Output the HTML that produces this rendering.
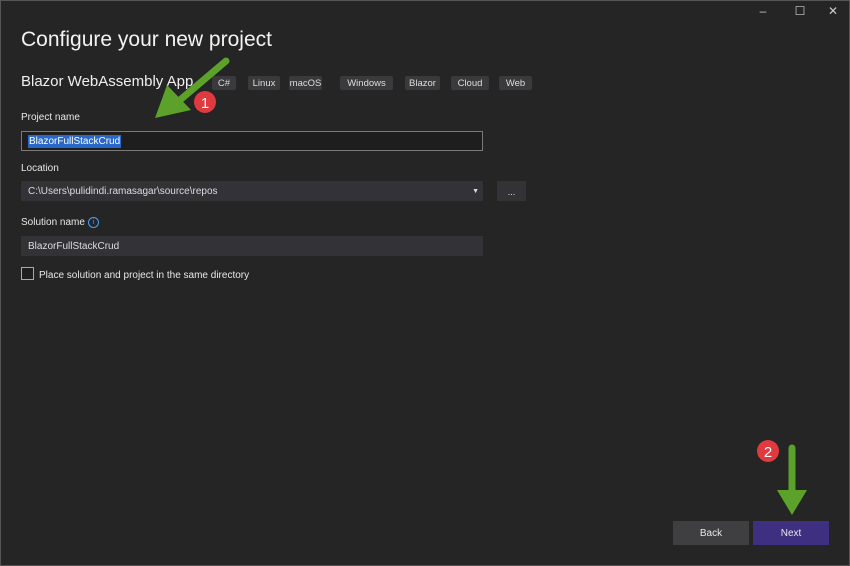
<!DOCTYPE html>
<html><head><style>
body{margin:0;width:850px;height:566px;background:#252526;font-family:"Liberation Sans",sans-serif;color:#e8e8e8;position:relative;overflow:hidden}
.frame{position:absolute;left:0;top:0;width:848px;height:564px;border:1px solid #555}
.a{position:absolute}
.tag{position:absolute;top:76px;height:14px;background:#3a3a3c;border-radius:2px;font-size:9.5px;line-height:15px;text-align:center;color:#ddd}
.lbl{position:absolute;left:21px;font-size:10px;color:#e8e8e8}
.inp{position:absolute;left:21px;width:462px;height:20px;background:#333337;font-size:10px;line-height:22px;box-sizing:border-box;padding-left:7px;color:#ddd}
.wb{position:absolute;top:4px;font-size:12px;color:#ccc;width:14px;text-align:center;margin-left:-7px}
</style></head><body>
<div class="frame"></div>
<div class="wb" style="left:763px">–</div>
<div class="wb" style="left:800px">☐</div>
<div class="wb" style="left:833px">✕</div>
<div class="a" style="left:21px;top:28px;font-size:21px;color:#f2f2f2">Configure your new project</div>
<div class="a" style="left:21px;top:73px;font-size:15px;color:#f0f0f0">Blazor WebAssembly App</div>
<div class="tag" style="left:212px;width:24px">C#</div>
<div class="tag" style="left:248px;width:32px">Linux</div>
<div class="tag" style="left:289px;width:33px">macOS</div>
<div class="tag" style="left:340px;width:53px">Windows</div>
<div class="tag" style="left:405px;width:35px">Blazor</div>
<div class="tag" style="left:451px;width:38px">Cloud</div>
<div class="tag" style="left:499px;width:33px">Web</div>
<div class="lbl" style="top:112px">Project name</div>
<div class="inp" style="top:131px;background:#1e1e1e;border:1px solid #7a7a7a;padding-left:6px;line-height:20px"><span style="background:#2967c8;color:#fff;padding:1px 1px">BlazorFullStackCrud</span></div>
<div class="lbl" style="top:163px">Location</div>
<div class="inp" style="top:181px">C:\Users\pulidindi.ramasagar\source\repos<span style="position:absolute;right:4px;font-size:7px">▼</span></div>
<div class="a" style="left:497px;top:181px;width:29px;height:20px;background:#333337;text-align:center;font-size:9px;line-height:22px">...</div>
<div class="lbl" style="top:217px">Solution name <span style="display:inline-block;width:9px;height:9px;border:1px solid #4aa0f0;border-radius:50%;color:#4aa0f0;font-size:7px;line-height:9px;text-align:center;vertical-align:middle">i</span></div>
<div class="inp" style="top:236px">BlazorFullStackCrud</div>
<div class="a" style="left:21px;top:267px;width:11px;height:11px;border:1px solid #aaa;background:#1e1e1e"></div>
<div class="a" style="left:39px;top:270px;font-size:10px">Place solution and project in the same directory</div>
<div class="a" style="left:673px;top:521px;width:76px;height:24px;background:#3f3f41;text-align:center;line-height:26px;font-size:10px">Back</div>
<div class="a" style="left:753px;top:521px;width:76px;height:24px;background:#3e2f80;text-align:center;line-height:26px;font-size:10px">Next</div>
<svg class="a" style="left:0;top:0" width="850" height="566">
<line x1="226" y1="61" x2="180" y2="100" stroke="#5ca22a" stroke-width="7" stroke-linecap="round"/>
<polygon points="155,118 167,85 191,110" fill="#5ca22a"/>
<circle cx="205" cy="102" r="11" fill="#e0393e"/>
<text x="205" y="108" font-size="15" fill="#fff" text-anchor="middle" font-family="Liberation Sans">1</text>
<line x1="792" y1="448" x2="792" y2="494" stroke="#5ca22a" stroke-width="7" stroke-linecap="round"/>
<polygon points="777,490 807,490 792,515" fill="#5ca22a"/>
<circle cx="768" cy="451" r="11" fill="#e0393e"/>
<text x="768" y="457" font-size="15" fill="#fff" text-anchor="middle" font-family="Liberation Sans">2</text>
</svg>
</body></html>
